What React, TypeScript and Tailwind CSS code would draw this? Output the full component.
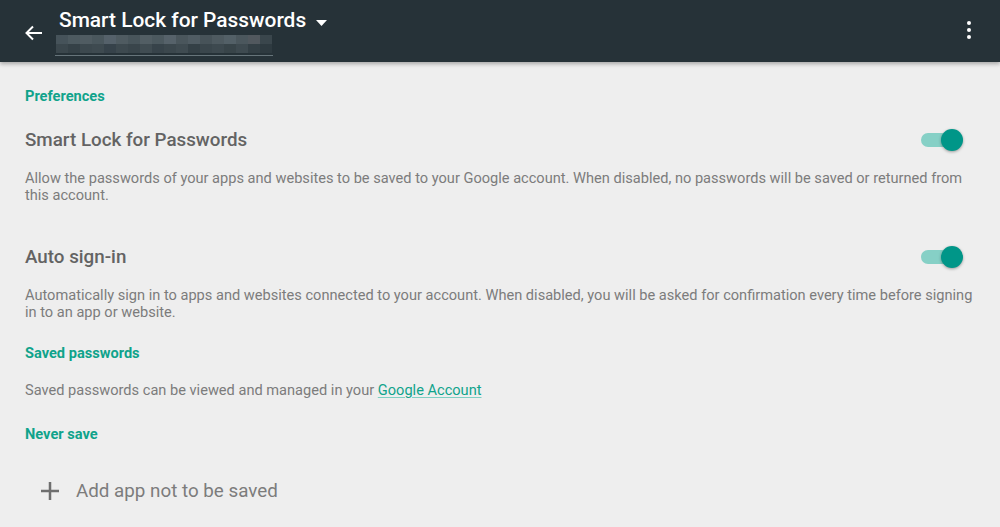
import React from 'react';

const blurCells = [
  ['#46535a', '#4d5a60', '#505c62', '#4a575d', '#55616a', '#4f5b61', '#48555b', '#525e64', '#4c595f', '#56626a', '#4a565c', '#505c63', '#475359', '#4e5a60', '#536067', '#4b575d', '#51585e', '#3a464c'],
  ['#3b474d', '#354147', '#3c484e', '#3e4a50', '#36424a', '#3d494f', '#39454b', '#404c52', '#37434a', '#3b474d', '#3f4b51', '#344046', '#3a464c', '#3d494f', '#384449', '#3e4a50', '#333f45', '#2e3a40'],
];

const Toggle: React.FC = () => (
  <div className="relative w-[42px] h-[24px] flex items-center">
    <div className="w-[36px] h-[14px] rounded-full bg-[#86d0c6]" />
    <div className="absolute right-0 top-[1px] w-[22px] h-[22px] rounded-full bg-[#009688] shadow-[0_1px_3px_rgba(0,0,0,0.35)]" />
  </div>
);

const SectionLabel: React.FC<{ children: React.ReactNode; className?: string }> = ({ children, className }) => (
  <div className={`text-[14.6px] leading-[20px] font-bold text-[#0fa38b] ${className ?? ''}`}>{children}</div>
);

const App: React.FC = () => {
  return (
    <div className="w-[1000px] h-[527px] overflow-hidden bg-[#eeeeee]" style={{ fontFamily: 'Roboto, "Noto Sans", sans-serif' }}>
      {/* top bar */}
      <div className="relative h-[62px] bg-[#263238] flex items-start shadow-[0_2px_4px_rgba(0,0,0,0.3)] z-10">
        <svg className="mt-[21px] ml-[22px]" width="24" height="24" viewBox="0 0 24 24" fill="none">
          <path d="M20 12H5M11 5.5 4.5 12l6.5 6.5" stroke="#ffffff" strokeWidth="2" />
        </svg>
        <div className="ml-[9px] flex flex-col">
          <div className="flex items-center mt-[7px]">
            <span className="ml-[4px] text-[20.9px] leading-[26px] font-medium text-white">Smart Lock for Passwords</span>
            <svg className="ml-[10px] mt-[6px]" width="11" height="6" viewBox="0 0 11 6">
              <path d="M0 0h11L5.5 6z" fill="#ffffff" />
            </svg>
          </div>
          <svg className="mt-[2px]" width="218" height="18" viewBox="0 0 216 18">
            {blurCells.map((row, r) =>
              row.map((c, i) => <rect key={`${r}-${i}`} x={i * 12} y={r * 9} width="12" height="9" fill={c} />)
            )}
          </svg>
          <div className="h-px w-[218px] bg-[#66747a] mt-[2px]" />
        </div>
        <div className="ml-auto mr-[29px] mt-[21px] flex flex-col gap-[3px]">
          <div className="w-[4px] h-[4px] rounded-full bg-white" />
          <div className="w-[4px] h-[4px] rounded-full bg-white" />
          <div className="w-[4px] h-[4px] rounded-full bg-white" />
        </div>
      </div>

      {/* content */}
      <div className="px-[25px]">
        <SectionLabel className="mt-[24px]">Preferences</SectionLabel>

        <div className="mt-[22px] flex items-center justify-between h-[24px]">
          <span className="text-[18.8px] leading-[24px] font-medium text-[#636363]">Smart Lock for Passwords</span>
          <div className="mr-[12px]"><Toggle /></div>
        </div>
        <p className="mt-[18px] text-[14.6px] leading-[17px] text-[#7c7c7c]">
          Allow the passwords of your apps and websites to be saved to your Google account. When disabled, no passwords will be saved or returned from this account.
        </p>

        <div className="mt-[41px] flex items-center justify-between h-[24px]">
          <span className="text-[18.8px] leading-[24px] font-medium text-[#636363]">Auto sign-in</span>
          <div className="mr-[12px]"><Toggle /></div>
        </div>
        <p className="mt-[18px] text-[14.6px] leading-[17px] text-[#7c7c7c]">
          Automatically sign in to apps and websites connected to your account. When disabled, you will be asked for confirmation every time before signing in to an app or website.
        </p>

        <SectionLabel className="mt-[22px]">Saved passwords</SectionLabel>
        <p className="mt-[17px] text-[14.6px] leading-[20px] text-[#7c7c7c]">
          Saved passwords can be viewed and managed in your{' '}
          <span className="text-[#0fa38b] underline underline-offset-2 decoration-[#7fcfc3]">Google Account</span>
        </p>

        <SectionLabel className="mt-[24px]">Never save</SectionLabel>

        <div className="mt-[35px] ml-[15px] flex items-center h-[24px]">
          <svg width="20" height="20" viewBox="0 0 20 20">
            <path d="M10 1v18M1 10h18" stroke="#6e6e6e" strokeWidth="2.5" />
          </svg>
          <span className="ml-[16px] text-[18.8px] leading-[24px] text-[#7c7c7c]">Add app not to be saved</span>
        </div>
      </div>
    </div>
  );
};

export default App;
